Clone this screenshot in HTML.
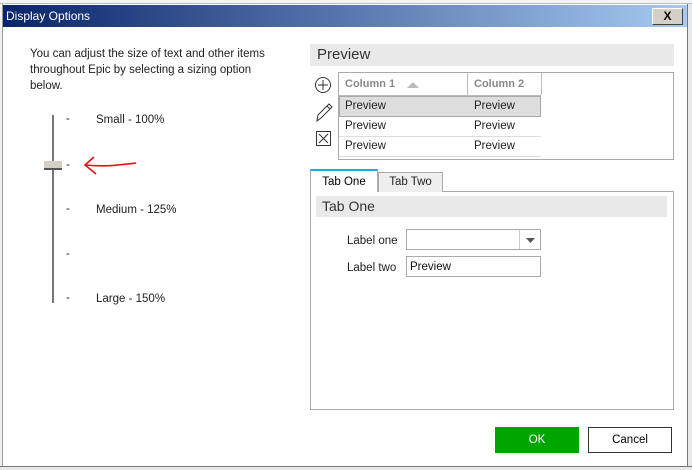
<!DOCTYPE html>
<html><head><style>
*{margin:0;padding:0;box-sizing:border-box}
body{width:692px;height:470px;position:relative;background:#fff;font-family:"Segoe UI","Liberation Sans",sans-serif;font-size:11.5px;color:#222;overflow:hidden}
.a{position:absolute}
</style></head><body>
<div class="a" style="left:0;top:0;width:692px;height:4px;background:#f4f4f4;border-bottom:1px solid #bbb"></div>
<div class="a" style="left:0;top:4px;width:3px;height:466px;background:#f0f0f0;border-right:1px solid #999"></div>
<div class="a" style="left:687px;top:4px;width:5px;height:466px;background:#e8e8e8;border-left:1px solid #777"></div>
<div class="a" style="left:0;top:466px;width:692px;height:4px;background:#e8e8e8;border-top:1px solid #777"></div>
<div class="a" style="left:3px;top:5px;width:684px;height:22px;background:linear-gradient(to right,#0a246a,#a6caf0)"></div>
<div class="a" style="left:6px;top:9px;color:#fff;font-size:12px">Display Options</div>
<div class="a" style="left:652px;top:8px;width:31px;height:17px;background:#d4d0c8;border:1px solid #404040;border-top-color:#fff;border-left-color:#fff;text-align:center;font-weight:bold;font-size:12px;line-height:15px;color:#000">X</div>

<div class="a" style="left:30px;top:46px;width:245px;line-height:16px">You can adjust the size of text and other items throughout Epic by selecting a sizing option below.</div>

<div class="a" style="left:52px;top:115px;width:2px;height:188px;background:#777"></div>
<div class="a" style="left:44px;top:161px;width:18px;height:9px;background:#d4d0c8;border-bottom:2px solid #555"></div>
<div class="a" style="left:66px;top:113px">-</div><div class="a" style="left:96px;top:114px">Small - 100%</div>
<div class="a" style="left:66px;top:159px">-</div>
<div class="a" style="left:66px;top:203px">-</div><div class="a" style="left:96px;top:204px">Medium - 125%</div>
<div class="a" style="left:66px;top:248px">-</div>
<div class="a" style="left:66px;top:292px">-</div><div class="a" style="left:96px;top:293px">Large - 150%</div>
<svg class="a" style="left:80px;top:155px" width="60" height="22"><path d="M56 8 C40 10 25 12 5 10 M14 2 L5 10 L16 19" stroke="#e11" stroke-width="1.6" fill="none"/></svg>

<div class="a" style="left:310px;top:44px;width:364px;height:22px;background:#e9e9e9"></div>
<div class="a" style="left:317px;top:46px;font-size:15px;color:#333">Preview</div>
<svg class="a" style="left:313px;top:75px" width="22" height="75"><circle cx="10" cy="10" r="7.5" fill="none" stroke="#333"/><path d="M10 5v10M5 10h10" stroke="#333"/><path d="M4 46 L5 40 L16 29 L19 32 L8 43 Z M14 31 L17 34" fill="none" stroke="#333"/><rect x="3.5" y="56.5" width="14" height="14" fill="none" stroke="#333"/><path d="M6 59l9 9M15 59l-9 9" stroke="#333"/></svg>
<div class="a" style="left:338px;top:72px;width:336px;height:88px;border:1px solid #aaa"></div>
<div class="a" style="left:339px;top:95px;width:202px;height:1px;background:#bbb"></div>
<div class="a" style="left:467px;top:73px;width:1px;height:22px;background:#bbb"></div>
<div class="a" style="left:541px;top:73px;width:1px;height:22px;background:#bbb"></div>
<div class="a" style="left:345px;top:78px;color:#888;font-weight:bold;font-size:11px">Column 1</div>
<svg class="a" style="left:407px;top:82px" width="12" height="6"><path d="M0 6L6 0L12 6Z" fill="#bbb"/></svg>
<div class="a" style="left:474px;top:78px;color:#888;font-weight:bold;font-size:11px">Column 2</div>
<div class="a" style="left:339px;top:96px;width:202px;height:21px;background:#ddd;border:1px solid #aaa"></div>
<div class="a" style="left:339px;top:136px;width:202px;height:1px;background:#ddd"></div>
<div class="a" style="left:339px;top:156px;width:202px;height:1px;background:#ddd"></div>
<div class="a" style="left:345px;top:100px">Preview</div><div class="a" style="left:474px;top:100px">Preview</div>
<div class="a" style="left:345px;top:120px">Preview</div><div class="a" style="left:474px;top:120px">Preview</div>
<div class="a" style="left:345px;top:140px">Preview</div><div class="a" style="left:474px;top:140px">Preview</div>

<div class="a" style="left:310px;top:191px;width:364px;height:219px;border:1px solid #aaa"></div>
<div class="a" style="left:378px;top:172px;width:65px;height:20px;background:#eee;border:1px solid #aaa;border-bottom:none;text-align:center;line-height:19px">Tab Two</div>
<div class="a" style="left:310px;top:169px;width:68px;height:23px;background:#fff;border:1px solid #aaa;border-top:2px solid #1fa9e1;border-bottom:none;text-align:center;line-height:22px;color:#000">Tab One</div>
<div class="a" style="left:316px;top:196px;width:351px;height:21px;background:#e9e9e9"></div>
<div class="a" style="left:322px;top:198px;font-size:14px;color:#333">Tab One</div>
<div class="a" style="left:347px;top:235px">Label one</div>
<div class="a" style="left:406px;top:229px;width:135px;height:21px;border:1px solid #aaa"></div>
<div class="a" style="left:519px;top:230px;width:1px;height:19px;background:#ccc"></div>
<svg class="a" style="left:526px;top:238px" width="9" height="5"><path d="M0 0h9L4.5 5Z" fill="#555"/></svg>
<div class="a" style="left:347px;top:262px">Label two</div>
<div class="a" style="left:406px;top:256px;width:135px;height:21px;border:1px solid #aaa;padding:4px 3px 0;color:#111">Preview</div>

<div class="a" style="left:495px;top:427px;width:84px;height:26px;background:#00a600;color:#fff;text-align:center;line-height:26px">OK</div>
<div class="a" style="left:588px;top:427px;width:84px;height:26px;border:1px solid #333;color:#000;text-align:center;line-height:24px">Cancel</div>
</body></html>
